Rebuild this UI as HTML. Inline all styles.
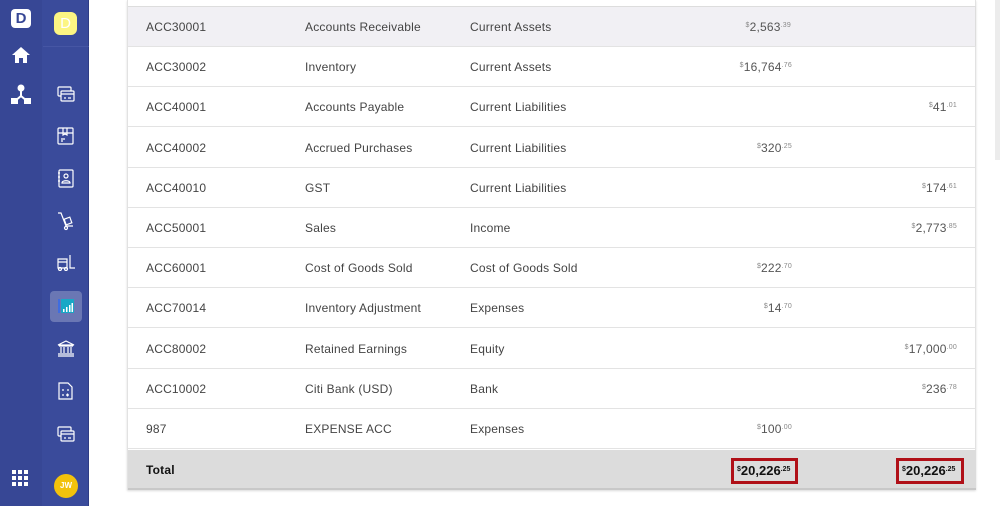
<!DOCTYPE html>
<html><head><meta charset="utf-8"><style>
*{margin:0;padding:0;box-sizing:border-box}
body{width:1000px;height:506px;overflow:hidden;background:#fff;font-family:"Liberation Sans",sans-serif;position:relative}
.sb1{position:absolute;left:0;top:0;width:42px;height:506px;background:#374795}
.sb2{position:absolute;left:42px;top:0;width:47px;height:506px;background:#3a4b9b;border-right:1px solid #2f3d85}
.ic{position:absolute}
.tbl{position:absolute;left:127px;top:0;width:849px;height:490px;border-left:1px solid #e2e2e2;border-right:1px solid #e2e2e2;box-shadow:0 1px 2px rgba(0,0,0,.15)}
.row{position:absolute;left:0;width:848px;height:40px;border-bottom:1px solid #e3e3e3;font-size:12px;color:#444;letter-spacing:.2px}
.row span{position:absolute;top:13px;line-height:14px}
.c1{left:18px}.c2{left:177px}.c3{left:342px}
.d{right:184px}.cr{right:19px}
sup{font-size:7px;vertical-align:4px;line-height:0;color:#888}
.amt{color:#555}
.tot{background:#dcdcdc;border-bottom:2px solid #c8c8c8;font-weight:bold;color:#111}
.box{position:absolute;top:8px;height:26px;border:3px solid #b01018;padding:3px 3px;font-size:13px;font-weight:bold;line-height:14px;letter-spacing:0}
.box sup{color:#111;font-weight:bold}
.scroll{position:absolute;left:995px;top:0;width:5px;height:160px;background:#ececec}
</style></head><body>
<div class="sb1"></div><div class="sb2"></div>
<div class="ic" style="left:11px;top:9px;width:20px;height:19px;background:#fff;border-radius:4px;color:#374795;font-weight:bold;font-size:15px;text-align:center;line-height:19px">D</div>
<svg class="ic" style="left:11px;top:46px" width="20" height="18" viewBox="0 0 20 18"><path d="M10 1L1 9h3v8h4v-5h4v5h4V9h3z" fill="#fff"/></svg>
<svg class="ic" style="left:11px;top:84px" width="20" height="20" viewBox="0 0 20 20" stroke="#fff" stroke-width="2" fill="#fff"><circle cx="10" cy="4" r="2.5"/><path d="M10 6v6M10 12l-6 5M10 12l6 5"/><rect x="1" y="15" width="5" height="4"/><rect x="14" y="15" width="5" height="4"/></svg>
<svg class="ic" style="left:12px;top:470px" width="17" height="17" viewBox="0 0 17 17" fill="#fff"><rect x="0" y="0" width="4" height="4"/><rect x="6" y="0" width="4" height="4"/><rect x="12" y="0" width="4" height="4"/><rect x="0" y="6" width="4" height="4"/><rect x="6" y="6" width="4" height="4"/><rect x="12" y="6" width="4" height="4"/><rect x="0" y="12" width="4" height="4"/><rect x="6" y="12" width="4" height="4"/><rect x="12" y="12" width="4" height="4"/></svg>
<div class="ic" style="left:54px;top:12px;width:23px;height:23px;background:#fcf583;border-radius:6px;color:#fff;font-size:15px;text-align:center;line-height:23px">D</div>
<div class="ic" style="left:43px;top:46px;width:46px;height:1px;background:#4656a4"></div>
<svg class="ic" style="left:57px;top:86px" width="18" height="16" viewBox="0 0 18 16" fill="none" stroke="#fff" stroke-width="1.2"><rect x="1" y="1" width="13" height="9" rx="1"/><rect x="4" y="5" width="13" height="10" rx="1" fill="#3a4b9b"/><path d="M4 8h13M7 12h2M11 12h3"/></svg>
<svg class="ic" style="left:57px;top:127px" width="17" height="18" viewBox="0 0 17 18" fill="none" stroke="#fff" stroke-width="1.2"><rect x="1" y="1" width="15" height="16" rx="1"/><path d="M1 6h15M6 1v7l2-1 2 1V1M4 12h4M4 14h2"/></svg>
<svg class="ic" style="left:57px;top:169px" width="17" height="19" viewBox="0 0 17 19" fill="none" stroke="#fff" stroke-width="1.2"><rect x="2" y="1" width="14" height="17" rx="1"/><circle cx="9" cy="7" r="2"/><path d="M5 14c0-3 8-3 8 0z M1 4h2M1 8h2M1 12h2"/></svg>
<svg class="ic" style="left:57px;top:211px" width="18" height="20" viewBox="0 0 18 20" fill="none" stroke="#fff" stroke-width="1.2"><path d="M1 2h3l5 13h7"/><rect x="8" y="7" width="6" height="6" transform="rotate(-20 11 10)"/><circle cx="9" cy="17" r="1.5"/></svg>
<svg class="ic" style="left:57px;top:254px" width="19" height="17" viewBox="0 0 19 17" fill="none" stroke="#fff" stroke-width="1.2"><path d="M1 14V5h9v9zM1 8h9M13 1v13h5"/><circle cx="3" cy="15" r="1.5"/><circle cx="9" cy="15" r="1.5"/></svg>
<div class="ic" style="left:50px;top:291px;width:32px;height:31px;background:#6a77b4;border-radius:4px"></div>
<div class="ic" style="left:58px;top:299px;width:2px;height:14px;background:#3f6de0"></div>
<div class="ic" style="left:61px;top:299px;width:13px;height:14px;background:#19a8c6"></div>
<svg class="ic" style="left:63px;top:302px" width="10" height="10" viewBox="0 0 10 10" fill="#fff"><rect x="0" y="7" width="1.5" height="3"/><rect x="3" y="5" width="1.5" height="5"/><rect x="6" y="3" width="1.5" height="7"/><rect x="8.5" y="1" width="1.5" height="9"/></svg>
<svg class="ic" style="left:57px;top:340px" width="18" height="17" viewBox="0 0 18 17" fill="none" stroke="#fff" stroke-width="1.2"><path d="M1 5L9 1l8 4zM2 6h14M4 7v6M7 7v6M11 7v6M14 7v6M1 14h16M1 16h16"/></svg>
<svg class="ic" style="left:58px;top:382px" width="15" height="18" viewBox="0 0 15 18" fill="none" stroke="#fff" stroke-width="1.2"><path d="M1 1h9l4 4v12H1z"/><path d="M4 8h2M9 8h2M4 13h2M8 13h3M9.5 11.5v3"/></svg>
<svg class="ic" style="left:57px;top:426px" width="18" height="16" viewBox="0 0 18 16" fill="none" stroke="#fff" stroke-width="1.2"><rect x="1" y="1" width="13" height="9" rx="1"/><rect x="4" y="5" width="13" height="10" rx="1" fill="#3a4b9b"/><path d="M4 8h13M7 12h2M11 12h3"/></svg>
<div class="ic" style="left:54px;top:474px;width:24px;height:24px;background:#f2c20c;border-radius:50%;color:#fff;font-size:8px;font-weight:bold;text-align:center;line-height:24px">JW</div>

<div class="tbl">
<div class="row" style="top:0;height:7px;border-bottom:1px solid #ddd"></div>
<div class="row" style="top:7px;background:#f1f0f4;border-right:1px solid #ddd"><span class="c1">ACC30001</span><span class="c2">Accounts Receivable</span><span class="c3">Current Assets</span><span class="d amt"><sup>$</sup>2,563<sup>.39</sup></span></div>
<div class="row" style="top:47px"><span class="c1">ACC30002</span><span class="c2">Inventory</span><span class="c3">Current Assets</span><span class="d amt"><sup>$</sup>16,764<sup>.76</sup></span></div>
<div class="row" style="top:87px"><span class="c1">ACC40001</span><span class="c2">Accounts Payable</span><span class="c3">Current Liabilities</span><span class="cr amt"><sup>$</sup>41<sup>.01</sup></span></div>
<div class="row" style="top:128px"><span class="c1">ACC40002</span><span class="c2">Accrued Purchases</span><span class="c3">Current Liabilities</span><span class="d amt"><sup>$</sup>320<sup>.25</sup></span></div>
<div class="row" style="top:168px"><span class="c1">ACC40010</span><span class="c2">GST</span><span class="c3">Current Liabilities</span><span class="cr amt"><sup>$</sup>174<sup>.61</sup></span></div>
<div class="row" style="top:208px"><span class="c1">ACC50001</span><span class="c2">Sales</span><span class="c3">Income</span><span class="cr amt"><sup>$</sup>2,773<sup>.85</sup></span></div>
<div class="row" style="top:248px"><span class="c1">ACC60001</span><span class="c2">Cost of Goods Sold</span><span class="c3">Cost of Goods Sold</span><span class="d amt"><sup>$</sup>222<sup>.70</sup></span></div>
<div class="row" style="top:288px"><span class="c1">ACC70014</span><span class="c2">Inventory Adjustment</span><span class="c3">Expenses</span><span class="d amt"><sup>$</sup>14<sup>.70</sup></span></div>
<div class="row" style="top:329px"><span class="c1">ACC80002</span><span class="c2">Retained Earnings</span><span class="c3">Equity</span><span class="cr amt"><sup>$</sup>17,000<sup>.00</sup></span></div>
<div class="row" style="top:369px"><span class="c1">ACC10002</span><span class="c2">Citi Bank (USD)</span><span class="c3">Bank</span><span class="cr amt"><sup>$</sup>236<sup>.78</sup></span></div>
<div class="row" style="top:409px"><span class="c1">987</span><span class="c2">EXPENSE ACC</span><span class="c3">Expenses</span><span class="d amt"><sup>$</sup>100<sup>.00</sup></span></div>
<div class="row tot" style="top:450px;height:40px"><span class="c1" style="left:18px;top:13px">Total</span>
<div class="box" style="left:603px;width:67px"><sup>$</sup>20,226<sup>.25</sup></div>
<div class="box" style="left:768px;width:68px"><sup>$</sup>20,226<sup>.25</sup></div></div>
</div>
<div class="scroll"></div>
</body></html>
